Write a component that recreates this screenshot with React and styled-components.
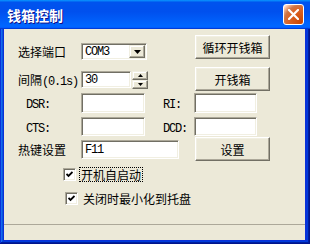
import React from 'react';
import styled, { createGlobalStyle } from 'styled-components';

const Global = createGlobalStyle`
  html, body { margin: 0; padding: 0; background: #fff; }
  body {
    font-family: "Noto Sans CJK SC", "Noto Sans", sans-serif;
    font-size: 12px;
    color: #000;
  }
`;

const Window = styled.div`
  width: 310px;
  height: 244px;
  display: flex;
  flex-direction: column;
  background: #0831d9;
  box-shadow: inset -1px -1px #00138c, inset 1px 1px #0831d9,
    inset -2px -2px #001ea0, inset 2px 2px #166aee,
    inset -3px -3px #003bda, inset 3px 3px #0855dd;
`;

const TitleBar = styled.div`
  flex: none;
  height: 29px;
  display: flex;
  align-items: center;
  padding: 0 6px 0 7px;
  background: linear-gradient(180deg, #0997ff, #0053ee 8%, #0050ee 40%, #06f 88%, #06f 93%, #005bff 95%, #003dd7 96%, #003dd7);
`;

const Title = styled.span`
  font-size: 14px;
  font-weight: 700;
  color: #fff;
  text-shadow: 1px 1px #0f1089;
`;

const CloseBtn = styled.div`
  margin-left: auto;
  width: 21px;
  height: 21px;
  box-sizing: border-box;
  border: 1px solid #fff;
  border-radius: 3px;
  background: radial-gradient(circle at 90% 90%, #cc4600 0%, #dc6527 55%, #cd7546 70%, #ffccb2 90%, #fff 100%);
  display: flex;
  align-items: center;
  justify-content: center;
`;

const Client = styled.div`
  flex: 1;
  margin: 0 5px 4px 4px;
  background: #ece9d8;
  display: flex;
  flex-direction: column;
`;

const Form = styled.div`
  flex: 1;
`;

const Row = styled.div`
  display: flex;
  align-items: flex-start;
  height: ${p => p.$h}px;
  margin-top: ${p => p.$mt}px;
  padding: 0 35px 0 14px;
`;

const Label = styled.span`
  flex: none;
  box-sizing: border-box;
  width: ${p => p.$w || 63}px;
  padding-left: ${p => p.$indent || 0}px;
  margin-left: ${p => p.$ml || 0}px;
  margin-top: ${p => p.$top || 0}px;
  height: ${p => p.$h}px;
  line-height: ${p => p.$h}px;
  white-space: nowrap;
`;

const Ascii = styled.span`
  font-family: "Liberation Mono", monospace;
  font-size: 12px;
  letter-spacing: -1.2px;
`;

const Sunken = styled.div`
  flex: none;
  box-sizing: border-box;
  width: ${p => p.$w}px;
  height: ${p => p.$h}px;
  margin-top: ${p => p.$top || 0}px;
  background: #fff;
  border: 1px solid;
  border-color: #aca899 #fff #fff #aca899;
  box-shadow: inset 1px 1px #716f64, inset -1px -1px #f1efe2;
  display: flex;
  align-items: center;
  padding: 0 2px 0 3px;
  font-family: "Liberation Mono", monospace;
  letter-spacing: -1.2px;
`;

const ComboValue = styled.span`
  flex: 1;
`;

const Raised = styled.div`
  box-sizing: border-box;
  background: #ece9d8;
  border: 1px solid;
  border-color: #f1efe2 #716f64 #716f64 #f1efe2;
  box-shadow: inset -1px -1px #aca899, inset 1px 1px #fff;
  display: flex;
  align-items: center;
  justify-content: center;
`;

const ComboArrow = styled(Raised)`
  width: 16px;
  height: 13px;
  margin-right: -1px;
`;

const Spinner = styled.div`
  flex: none;
  width: 16px;
  height: 18px;
  margin: ${p => p.$top}px 0 0 1px;
  display: flex;
  flex-direction: column;
`;

const SpinHalf = styled(Raised)`
  height: 9px;
`;

const Button = styled.button`
  flex: none;
  box-sizing: border-box;
  width: 75px;
  height: 24px;
  margin-left: auto;
  padding: 0;
  background: #ece9d8;
  border: 1px solid;
  border-color: #fff #716f64 #716f64 #fff;
  box-shadow: inset -1px -1px #aca899, inset 1px 1px #f1efe2;
  font: inherit;
  color: #000;
`;

const CheckRow = styled.div`
  display: flex;
  align-items: center;
  height: 15px;
  margin-top: ${p => p.$mt}px;
  padding-left: ${p => p.$indent}px;
`;

const Box = styled.span`
  flex: none;
  box-sizing: border-box;
  width: 13px;
  height: 13px;
  background: #fff;
  border: 1px solid;
  border-color: #aca899 #fff #fff #aca899;
  box-shadow: inset 1px 1px #716f64, inset -1px -1px #f1efe2;
  display: flex;
  align-items: center;
  justify-content: center;
`;

const CheckText = styled.span`
  margin-left: ${p => p.$ml}px;
  padding: 0 1px;
  height: 13px;
  line-height: 13px;
  border: 1px dotted ${p => (p.$focus ? '#000' : 'transparent')};
  white-space: nowrap;
`;

const StatusBar = styled.div`
  flex: none;
  height: 15px;
  border-top: 1px solid #aca899;
`;

const Down = ({ w = 7, h = 4 }) => (
  <svg width={w} height={h} viewBox={`0 0 ${w} ${h}`}>
    <polygon points={`0,0 ${w},0 ${w / 2},${h}`} fill="#000" />
  </svg>
);

const Up = () => (
  <svg width="5" height="3" viewBox="0 0 5 3">
    <polygon points="0,3 5,3 2.5,0" fill="#000" />
  </svg>
);

const Tick = () => (
  <svg width="7" height="7" viewBox="0 0 7 7">
    <polyline points="0.5,3 2.5,5 6.5,1" fill="none" stroke="#000" strokeWidth="1.8" />
  </svg>
);

const Check = ({ indent, mt, ml, focus, children }) => (
  <CheckRow $indent={indent} $mt={mt}>
    <Box><Tick /></Box>
    <CheckText $ml={ml} $focus={focus}>{children}</CheckText>
  </CheckRow>
);

export default function App() {
  return (
    <>
      <Global />
      <Window>
        <TitleBar>
          <Title>钱箱控制</Title>
          <CloseBtn>
            <svg width="11" height="11" viewBox="0 0 11 11">
              <path d="M1 1 L10 10 M10 1 L1 10" stroke="#fff" strokeWidth="2.2" strokeLinecap="square" />
            </svg>
          </CloseBtn>
        </TitleBar>
        <Client>
          <Form>
            <Row $h={24} $mt={6}>
              <Label $h={17} $top={8}>选择端口</Label>
              <Sunken $w={66} $h={17} $top={8}>
                <ComboValue>COM3</ComboValue>
                <ComboArrow><Down /></ComboArrow>
              </Sunken>
              <Button>循环开钱箱</Button>
            </Row>
            <Row $h={24} $mt={8}>
              <Label $h={17} $top={4}>间隔<Ascii>(0.1s)</Ascii></Label>
              <Sunken $w={50} $h={17} $top={4}>30</Sunken>
              <Spinner $top={4}>
                <SpinHalf><Up /></SpinHalf>
                <SpinHalf><Down w={5} h={3} /></SpinHalf>
              </Spinner>
              <Button>开钱箱</Button>
            </Row>
            <Row $h={20} $mt={2}>
              <Label $h={20} $indent={8}><Ascii>DSR:</Ascii></Label>
              <Sunken $w={64} $h={20} />
              <Label $h={20} $w={31} $ml={18}><Ascii>RI:</Ascii></Label>
              <Sunken $w={63} $h={20} />
            </Row>
            <Row $h={20} $mt={4}>
              <Label $h={19} $indent={8}><Ascii>CTS:</Ascii></Label>
              <Sunken $w={64} $h={19} />
              <Label $h={19} $w={31} $ml={18}><Ascii>DCD:</Ascii></Label>
              <Sunken $w={63} $h={19} />
            </Row>
            <Row $h={24} $mt={0}>
              <Label $h={19} $top={3}>热键设置</Label>
              <Sunken $w={98} $h={19} $top={3}>F11</Sunken>
              <Button>设置</Button>
            </Row>
            <Check indent={59} mt={6} ml={3} focus>开机自启动</Check>
            <Check indent={61} mt={9} ml={3}>关闭时最小化到托盘</Check>
          </Form>
          <StatusBar />
        </Client>
      </Window>
    </>
  );
}
